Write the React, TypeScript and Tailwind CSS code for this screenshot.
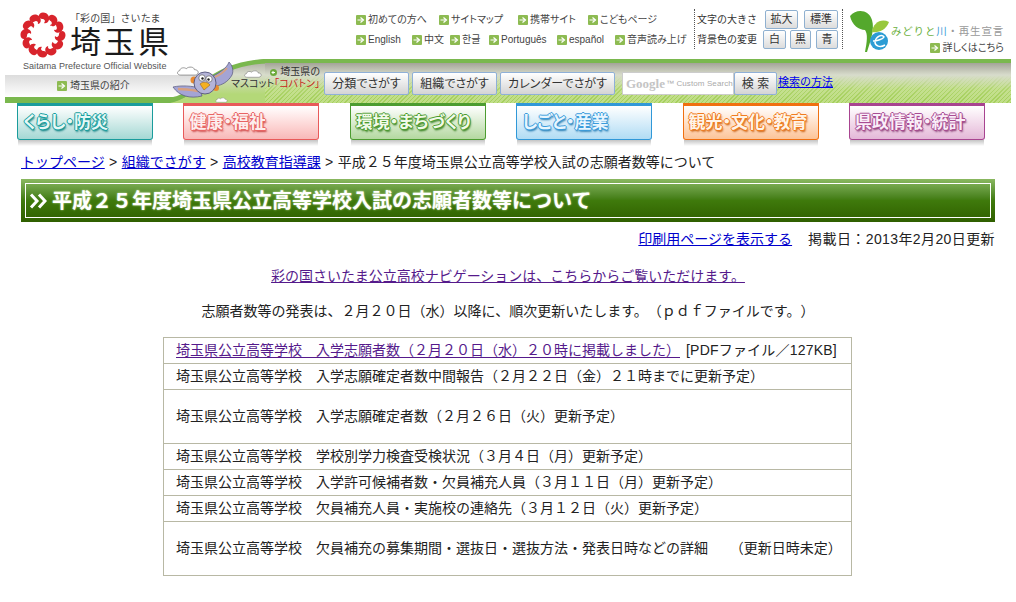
import React from "react";

const Arrow = () => (
  <svg width="10" height="10" viewBox="0 0 10 10" className="shrink-0">
    <rect width="10" height="10" rx="1" fill="#8dbb52" />
    <path d="M1.5 5h5M4.5 2.5 7.5 5l-3 2.5" fill="none" stroke="#fff" strokeWidth="1.2" />
  </svg>
);

const TopLink = ({ label, className = "" }: { label: string; className?: string }) => (
  <a className={`flex items-center gap-[2px] text-[10px] leading-none whitespace-nowrap text-[#444] [font-feature-settings:'palt'] ${className}`}>
    <Arrow />
    {label}
  </a>
);

const SizeBtn = ({ label, className }: { label: string; className: string }) => (
  <span className={`flex h-[19px] items-center justify-center rounded-[2px] border border-[#8fb0d0] bg-gradient-to-b from-white to-[#dcdcdc] text-[11px] leading-none text-[#333] ${className}`}>
    {label}
  </span>
);

const BarBtn = ({ label, className }: { label: string; className: string }) => (
  <span className={`flex h-[23px] items-center justify-center rounded-[2px] border border-[#8fb0d8] bg-gradient-to-b from-white to-[#d4d4d4] text-[12px] leading-none text-[#333] [font-feature-settings:'palt'] ${className}`}>
    {label}
  </span>
);

const tabs = [
  { label: "くらし・防災", box: "border-[#1a9c9c] from-white to-[#a4d8d4]", text: "text-[#e6f8f6] [text-shadow:1px_0_0_#16a0a0,-1px_0_0_#16a0a0,0_1px_0_#16a0a0,0_-1px_0_#16a0a0,1px_2px_2px_#0f7f80]" },
  { label: "健康・福祉", box: "border-[#e85a5a] from-white to-[#f8b8b8]", text: "text-[#fdeeee] [text-shadow:1px_0_0_#e86464,-1px_0_0_#e86464,0_1px_0_#e86464,0_-1px_0_#e86464,1px_2px_2px_#c84040]" },
  { label: "環境・まちづくり", box: "border-[#4c9c30] from-white to-[#b4d8a0]", text: "text-[#f2fae8] [text-shadow:1px_0_0_#4c9c30,-1px_0_0_#4c9c30,0_1px_0_#4c9c30,0_-1px_0_#4c9c30,1px_2px_2px_#307c18]" },
  { label: "しごと・産業", box: "border-[#3098d8] from-white to-[#b0dcf4]", text: "text-[#e8f6fe] [text-shadow:1px_0_0_#3a9cdc,-1px_0_0_#3a9cdc,0_1px_0_#3a9cdc,0_-1px_0_#3a9cdc,1px_2px_2px_#2078b0]" },
  { label: "観光・文化・教育", box: "border-[#f07010] from-white to-[#fcc498]", text: "text-[#fff4e8] [text-shadow:1px_0_0_#f07c20,-1px_0_0_#f07c20,0_1px_0_#f07c20,0_-1px_0_#f07c20,1px_2px_2px_#c85c08]" },
  { label: "県政情報・統計", box: "border-[#a84490] from-white to-[#e4b8d8]", text: "text-[#faeef8] [text-shadow:1px_0_0_#a84c94,-1px_0_0_#a84c94,0_1px_0_#a84c94,0_-1px_0_#a84c94,1px_2px_2px_#80306c]" },
];

const rows = [
  { h: "h-[26px]", text: "埼玉県公立高等学校　入学志願者数（２月２０日（水）２０時に掲載しました）", link: true },
  { h: "h-[26px]", text: "埼玉県公立高等学校　入学志願確定者数中間報告（２月２２日（金）２１時までに更新予定）" },
  { h: "h-[54px]", text: "埼玉県公立高等学校　入学志願確定者数（２月２６日（火）更新予定）" },
  { h: "h-[26px]", text: "埼玉県公立高等学校　学校別学力検査受検状況（３月４日（月）更新予定）" },
  { h: "h-[26px]", text: "埼玉県公立高等学校　入学許可候補者数・欠員補充人員（３月１１日（月）更新予定）" },
  { h: "h-[26px]", text: "埼玉県公立高等学校　欠員補充人員・実施校の連絡先（３月１２日（火）更新予定）" },
  { h: "h-[54px]", text: "埼玉県公立高等学校　欠員補充の募集期間・選抜日・選抜方法・発表日時などの詳細　\u00a0\u00a0（更新日時未定）" },
];

const Emblem = () => (
  <svg width="46" height="46" viewBox="-23 -23 46 46" className="shrink-0">
    {Array.from({ length: 12 }).map((_, i) => (
      <path
        key={i}
        transform={`rotate(${i * 30})`}
        d="M0 -22.5C5 -22.5 7.5 -17.5 5.5 -14C4.5 -12 2.5 -11.5 1 -12C3 -14 1.5 -16 -1 -16C-5.5 -16.5 -5 -22.5 0 -22.5Z"
        fill="#d8242c"
      />
    ))}
  </svg>
);

const Cloud = ({ className }: { className: string }) => (
  <svg viewBox="0 0 26 11" className={className}>
    <path d="M5 10C1 10 0 6 4 5C4 2 9 1 11 3C14 0 20 1 20 4C25 4 26 9 21 10Z" fill="#fff" stroke="#777" strokeWidth=".8" />
  </svg>
);

const Bird = ({ className }: { className: string }) => (
  <svg width="64" height="44" viewBox="0 0 64 44" className={className}>
    <path d="M1 28C10 26 20 27 28 29L30 37C18 40 7 37 1 28Z" fill="#a4a4d4" stroke="#55557a" strokeWidth=".7" />
    <path d="M6 30C13 30 20 31 26 32" stroke="#d8a080" strokeWidth="2.5" fill="none" />
    <path d="M41 17C47 14 55 9 57 3C60 6 62 11 60 16C56 23 50 26 44 27Z" fill="#a4a4d4" stroke="#55557a" strokeWidth=".7" />
    <path d="M43 18C48 16 52 13 55 9" stroke="#d8a080" strokeWidth="2" fill="none" />
    <circle cx="22" cy="21" r="3.5" fill="#e88a30" />
    <circle cx="44" cy="29" r="3" fill="#e88a30" />
    <circle cx="33" cy="24" r="11" fill="#b4b4d8" stroke="#55557a" strokeWidth=".9" />
    <circle cx="30" cy="19" r="3.2" fill="#fff" stroke="#444" strokeWidth=".6" />
    <circle cx="37" cy="20" r="3.2" fill="#fff" stroke="#444" strokeWidth=".6" />
    <circle cx="30.5" cy="19.5" r="1.2" fill="#222" />
    <circle cx="36.5" cy="20.5" r="1.2" fill="#222" />
    <path d="M28 25C31 22 36 23 38 26L32 31Z" fill="#f4b020" stroke="#8a5a10" strokeWidth=".5" />
  </svg>
);

const Sprout = () => (
  <svg width="42" height="46" viewBox="0 0 42 46" className="shrink-0">
    <path d="M1 8C8 0 20 2 23 12C26 22 21 34 18 44L16 44C18 34 19 26 16 22C10 22 3 17 1 8Z" fill="#54a82c" />
    <path d="M23 24C24 15 32 10 40 14C37 22 30 25 23 24Z" fill="#98c83c" />
    <circle cx="30" cy="33" r="9" fill="#2c9cd4" />
    <path d="M24 33C28 33 34 31 35 29C33 26 27 28 26 34C26 38 31 40 36 37" fill="none" stroke="#fff" strokeWidth="1.5" />
  </svg>
);

export default function App() {
  return (
    <div className="min-h-[602px] w-[1016px] overflow-hidden bg-white font-['Liberation_Sans','Noto_Sans_CJK_JP','Noto_Sans_CJK_KR',sans-serif] text-[14px] text-[#222] [text-spacing-trim:space-all]">
      {/* header */}
      <header className="relative ml-[5px] flex h-[103px] w-[1006px]">
        <div className="flex w-[225px] shrink-0 flex-col">
          <div className="flex h-[75px] flex-col">
            <div className="flex pl-[15px] pt-[12px]">
              <Emblem />
              <div className="ml-[4px] flex flex-col">
                <span className="mt-[1px] text-[10px] leading-[12px] tracking-[0.1px] text-[#444]">「彩の国」さいたま</span>
                <span className="mt-[1px] text-[31px] leading-[33px] tracking-[3px] text-[#1a1a1a]">埼玉県</span>
              </div>
            </div>
            <span className="mt-[2px] whitespace-nowrap pl-[18px] font-['Liberation_Sans'] text-[9px] leading-[11px] tracking-[0.05px] text-[#555]">
              Saitama Prefecture Official Website
            </span>
          </div>
          <div className="flex h-[22px] items-center bg-gradient-to-b from-[#dcdcdc] to-white pl-[52px]">
            <TopLink label="埼玉県の紹介" className="gap-[3px]" />
          </div>
          <div className="h-[6px] bg-[#7ab84e]" />
        </div>

        {/* curve of the green bar */}
        <svg width="100" height="44" viewBox="0 0 100 44" className="absolute left-[165px] top-[59px]">
          <defs>
            <linearGradient id="curveFill" x1="0" y1="0" x2="0" y2="1">
              <stop offset="0" stopColor="#a4a498" />
              <stop offset="0.35" stopColor="#d8dccc" />
              <stop offset="0.8" stopColor="#b4d878" />
            </linearGradient>
          </defs>
          <path d="M0 44C30 38 40 2 100 0V44Z" fill="url(#curveFill)" />
          <path d="M0 41C30 36 42 3 100 2" fill="none" stroke="#7ab84e" strokeWidth="4.5" />
        </svg>
        <Bird className="absolute left-[167px] top-[59px] z-10" />
        <Cloud className="absolute left-[171px] top-[66px] z-10 h-[10px] w-[24px]" />
        <Cloud className="absolute left-[238px] top-[70px] z-10 h-[8px] w-[20px]" />
        <Cloud className="absolute left-[210px] top-[97px] z-10 h-[6px] w-[13px]" />

        <div className="relative flex flex-1 flex-col">
          <div className="flex h-[59px]">
            <div className="ml-[126px] flex w-[338px] flex-col pt-[15px]">
              <div className="flex h-[20px]">
                <TopLink label="初めての方へ" className="h-[10px] w-[83px]" />
                <TopLink label="サイトマップ" className="h-[10px] w-[79px]" />
                <TopLink label="携帯サイト" className="h-[10px] w-[70px]" />
                <TopLink label="こどもページ" className="h-[10px]" />
              </div>
              <div className="flex">
                <TopLink label="English" className="h-[10px] w-[56px] text-[10.5px]" />
                <TopLink label="中文" className="h-[10px] w-[38px]" />
                <TopLink label="한글" className="h-[10px] w-[39px]" />
                <TopLink label="Português" className="h-[10px] w-[68px] text-[10.5px]" />
                <TopLink label="español" className="h-[10px] w-[58px] text-[10.5px]" />
                <TopLink label="音声読み上げ" className="h-[10px]" />
              </div>
            </div>
            <div className="mb-[10px] mt-[9px] flex w-[149px] flex-col gap-[1px] border-x border-dotted border-[#555] pl-[2px] pt-[1px]">
              <div className="flex items-center text-[10px] leading-none text-[#333]">
                <span className="w-[68px] whitespace-nowrap">文字の大きさ</span>
                <SizeBtn label="拡大" className="w-[33px]" />
                <SizeBtn label="標準" className="ml-[6px] w-[34px]" />
              </div>
              <div className="flex items-center text-[10px] leading-none text-[#333]">
                <span className="w-[66px] whitespace-nowrap">背景色の変更</span>
                <SizeBtn label="白" className="w-[23px]" />
                <SizeBtn label="黒" className="ml-[4px] w-[21px]" />
                <SizeBtn label="青" className="ml-[5px] w-[22px]" />
              </div>
            </div>
            <div className="ml-[6px] flex pt-[8px]">
              <Sprout />
              <div className="flex flex-col items-end">
                <span className="mt-[17px] whitespace-nowrap text-[10.5px] leading-[13px] tracking-[0.8px] text-[#999]">
                  <span className="text-[#6cb040]">みどりと</span>
                  <span className="text-[#3c9cd8]">川</span>・再生宣言
                </span>
                <TopLink label="詳しくはこちら" className="mt-[5px] gap-[3px]" />
              </div>
            </div>
          </div>
          <div className="ml-[35px] flex h-[44px] items-start border-t-[4px] border-[#7ab84e] bg-[linear-gradient(to_bottom,#a4a498_0px,#d8dccc_12px,rgba(216,232,176,0.2)_26px,rgba(168,208,100,0)_36px),repeating-linear-gradient(135deg,#a6d05e_0px,#a6d05e_1px,#c0de88_1px,#c0de88_3px)]">
            <div className="relative z-10 -ml-[34px] mt-[3px] flex w-[89px] shrink-0 flex-col items-end text-[10px] leading-[12px] text-[#333] [font-feature-settings:'palt']">
              <span className="flex items-center gap-[3px] whitespace-nowrap">
                <svg width="7" height="7" viewBox="0 0 7 7">
                  <circle cx="3.5" cy="3.5" r="3.5" fill="#6cab3c" />
                  <path d="M5 3.5H2M3.5 2 2 3.5 3.5 5" stroke="#fff" fill="none" />
                </svg>
                埼玉県の
              </span>
              <span className="whitespace-nowrap">
                マスコット<span className="text-[#c81e1e]">「コバトン」</span>
              </span>
            </div>
            <div className="ml-[4px] mt-[9px] flex items-start gap-[3px]">
              <BarBtn label="分類でさがす" className="w-[85px]" />
              <BarBtn label="組織でさがす" className="w-[85px]" />
              <BarBtn label="カレンダーでさがす" className="w-[115px]" />
            </div>
            <div className="ml-[7px] mt-[9px] flex h-[23px] w-[112px] items-center whitespace-nowrap border border-[#ccc] bg-white pl-[3px] leading-none text-[#aaa]">
              <span className="font-['Liberation_Serif'] text-[13px] font-bold text-[#c4c4c4]">Google</span>
              <span className="ml-[1px] text-[8px] tracking-[0.1px]">™ Custom Search</span>
            </div>
            <BarBtn label="検 索" className="mt-[9px] w-[43px]" />
            <a className="ml-[1px] mt-[12px] whitespace-nowrap text-[11px] leading-[14px] text-[#0000ee] underline">検索の方法</a>
          </div>
        </div>
      </header>

      {/* category tabs */}
      <nav className="flex gap-[30.4px] pl-[17px]">
        {tabs.map((t) => (
          <div key={t.label} className="w-[136px]">
            <div className={`flex h-[37px] items-center rounded-b-[3px] border border-t-[3px] bg-gradient-to-b pl-[5px] ${t.box}`}>
              <span className={`whitespace-nowrap text-[17px] font-bold leading-none [font-feature-settings:'palt'] ${t.text}`}>{t.label}</span>
            </div>
            <div className="mx-[1px] h-[6px] bg-gradient-to-b from-[#c4c4c4] to-white" />
          </div>
        ))}
      </nav>

      {/* breadcrumb */}
      <div className="mt-[6px] pl-[21px] text-[14px] leading-[20px] [word-spacing:0.5px]">
        <a className="text-[#0000cc] underline">トップページ</a> &gt; <a className="text-[#0000cc] underline">組織でさがす</a> &gt;{" "}
        <a className="text-[#0000cc] underline">高校教育指導課</a> &gt; 平成２５年度埼玉県公立高等学校入試の志願者数等について
      </div>

      {/* page title */}
      <div className="ml-[21px] mt-[7px] h-[43px] w-[974px] bg-gradient-to-b from-[#8ab860] via-[#3f7a0c] to-[#2f5f00] p-[4px]">
        <h1 className="flex h-[35px] items-center whitespace-nowrap border border-white pl-[3px] text-[20px] font-bold leading-none text-white [text-shadow:0_0_2px_#cfe8b0]">
          <svg width="18" height="18" viewBox="0 0 18 18" className="mr-[5px] shrink-0">
            <path d="M2 2.5 8 9l-6 6.5M10 2.5 16 9l-6 6.5" fill="none" stroke="#fff" strokeWidth="3" />
          </svg>
          平成２５年度埼玉県公立高等学校入試の志願者数等について
        </h1>
      </div>

      {/* dates */}
      <div className="mt-[7px] flex justify-end pr-[21px] text-[14px] leading-[20px]">
        <a className="text-[#0000cc] underline">印刷用ページを表示する</a>
        <span className="ml-[16px] tracking-[0.4px]">掲載日：2013年2月20日更新</span>
      </div>

      <p className="mt-[17px] text-center text-[14px] leading-[20px]">
        <a className="text-[#551a8b] underline">彩の国さいたま公立高校ナビゲーションは、こちらからご覧いただけます。</a>
      </p>

      <p className="mt-[15px] text-center text-[14px] leading-[20px]">
        志願者数等の発表は、２月２０日（水）以降に、順次更新いたします。（ｐｄｆファイルです。）
      </p>

      {/* list */}
      <div className="ml-[163px] mt-[16px] w-[689px] border border-b-0 border-[#b8b8a4]">
        {rows.map((r) => (
          <div key={r.text} className={`flex items-center whitespace-nowrap border-b border-[#b8b8a4] pb-[2px] pl-[12px] text-[14px] leading-none ${r.h}`}>
            {r.link ? (
              <>
                <a className="text-[#551a8b] underline underline-offset-2">{r.text}</a>
                <span className="ml-[6px] tracking-[0.2px]">[PDFファイル／127KB]</span>
              </>
            ) : (
              r.text
            )}
          </div>
        ))}
      </div>
    </div>
  );
}
